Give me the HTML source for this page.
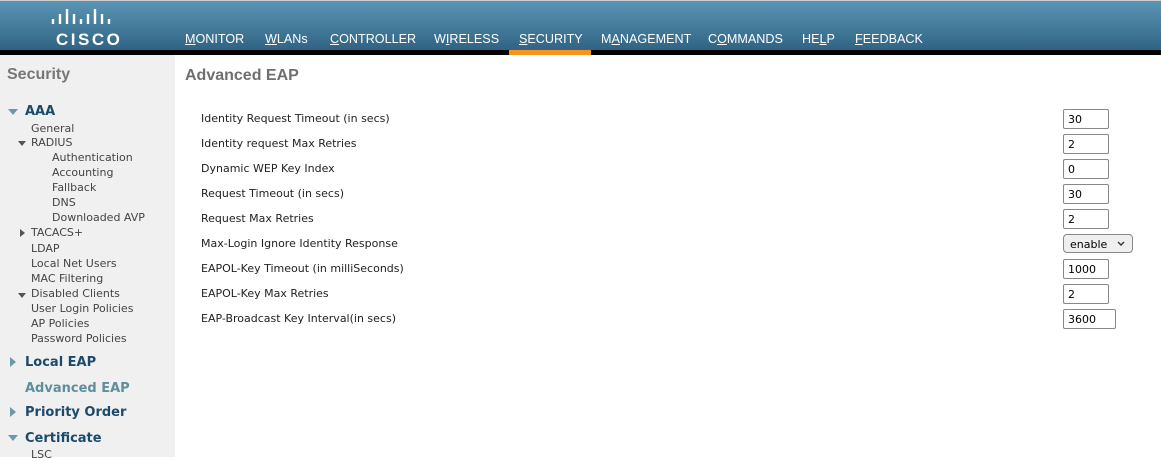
<!DOCTYPE html>
<html><head><style>
*{margin:0;padding:0;box-sizing:border-box}
body{width:1161px;height:457px;overflow:hidden;background:#fff;font-family:"DejaVu Sans",Verdana,sans-serif;position:relative}
.hdr{position:absolute;left:0;top:0;width:1161px;height:51px;border-top:1px solid #ccc;background:linear-gradient(#5b95b5,#2f6283)}
.blk{position:absolute;left:0;top:50px;width:1161px;height:5px;background:#000}
.org{position:absolute;left:509px;top:50px;width:82px;height:5px;background:#f7941d}
.nav{position:absolute;top:32px;color:#fff;font:12.6px "Liberation Sans",Tahoma,sans-serif}
.nav u{text-decoration:underline}
.side{position:absolute;left:0;top:55px;width:175px;height:402px;background:#f0f0f0}
.t{position:absolute;font-size:11px;color:#444;white-space:nowrap}
.b{position:absolute;font:bold 13px "DejaVu Sans",Verdana,sans-serif;color:#1b4a6b;white-space:nowrap}
.tri{position:absolute;width:0;height:0}
.l{position:absolute;left:201px;font-size:11px;color:#222;white-space:nowrap}
.in{position:absolute;left:1063px;width:46px;height:20px;border:1px solid #888;border-radius:2px;font-size:11px;padding:3px 0 0 4px;color:#000;background:#fff}
</style></head><body>
<div class="hdr"></div>
<div class="blk"></div><div class="org"></div>
<svg style="position:absolute;left:50px;top:8px" width="70" height="18">
<g stroke="#fff" stroke-width="2.4">
<line x1="3" y1="11" x2="3" y2="16"/><line x1="10" y1="6" x2="10" y2="16"/><line x1="17" y1="1" x2="17" y2="16"/><line x1="24" y1="6" x2="24" y2="16"/><line x1="31" y1="11" x2="31" y2="16"/><line x1="38" y1="6" x2="38" y2="16"/><line x1="45" y1="1" x2="45" y2="16"/><line x1="52" y1="6" x2="52" y2="16"/><line x1="59" y1="11" x2="59" y2="16"/>
</g></svg>
<div style="position:absolute;left:56px;top:30px;color:#fff;font:bold 17px 'Liberation Sans',sans-serif;letter-spacing:2.5px">CISCO</div>
<div class="nav" style="left:185px"><u>M</u>ONITOR</div>
<div class="nav" style="left:265px"><u>W</u>LANs</div>
<div class="nav" style="left:330px"><u>C</u>ONTROLLER</div>
<div class="nav" style="left:434px">W<u>I</u>RELESS</div>
<div class="nav" style="left:519px"><u>S</u>ECURITY</div>
<div class="nav" style="left:601px">M<u>A</u>NAGEMENT</div>
<div class="nav" style="left:708px">C<u>O</u>MMANDS</div>
<div class="nav" style="left:802px">HE<u>L</u>P</div>
<div class="nav" style="left:855px"><u>F</u>EEDBACK</div>
<div class="side"></div>
<div style="position:absolute;left:7px;top:66px;font:bold 16px 'Liberation Sans',sans-serif;color:#777">Security</div>
<div style="position:absolute;left:185px;top:67px;font:bold 16px 'Liberation Sans',sans-serif;color:#6f6f6f">Advanced EAP</div>
<div class="tri" style="left:8px;top:109px;border-left:5px solid transparent;border-right:5px solid transparent;border-top:6px solid #6a9aaa"></div>
<div class="b" style="left:25px;top:104px">AAA</div>
<div class="t" style="left:31px;top:122px">General</div>
<div class="tri" style="left:18px;top:141px;border-left:4px solid transparent;border-right:4px solid transparent;border-top:5px solid #555"></div>
<div class="t" style="left:31px;top:136px">RADIUS</div>
<div class="t" style="left:52px;top:151px">Authentication</div>
<div class="t" style="left:52px;top:166px">Accounting</div>
<div class="t" style="left:52px;top:181px">Fallback</div>
<div class="t" style="left:52px;top:196px">DNS</div>
<div class="t" style="left:52px;top:211px">Downloaded AVP</div>
<div class="tri" style="left:20px;top:229px;border-top:4px solid transparent;border-bottom:4px solid transparent;border-left:5px solid #555"></div>
<div class="t" style="left:31px;top:226px">TACACS+</div>
<div class="t" style="left:31px;top:242px">LDAP</div>
<div class="t" style="left:31px;top:257px">Local Net Users</div>
<div class="t" style="left:31px;top:272px">MAC Filtering</div>
<div class="tri" style="left:18px;top:293px;border-left:4px solid transparent;border-right:4px solid transparent;border-top:5px solid #555"></div>
<div class="t" style="left:31px;top:287px">Disabled Clients</div>
<div class="t" style="left:31px;top:302px">User Login Policies</div>
<div class="t" style="left:31px;top:317px">AP Policies</div>
<div class="t" style="left:31px;top:332px">Password Policies</div>
<div class="tri" style="left:10px;top:357px;border-top:5px solid transparent;border-bottom:5px solid transparent;border-left:6px solid #6a9aaa"></div>
<div class="b" style="left:25px;top:355px">Local EAP</div>
<div class="b" style="left:25px;top:381px;color:#5f8f9c">Advanced EAP</div>
<div class="tri" style="left:10px;top:407px;border-top:5px solid transparent;border-bottom:5px solid transparent;border-left:6px solid #6a9aaa"></div>
<div class="b" style="left:25px;top:405px">Priority Order</div>
<div class="tri" style="left:8px;top:435px;border-left:5px solid transparent;border-right:5px solid transparent;border-top:6px solid #6a9aaa"></div>
<div class="b" style="left:25px;top:431px">Certificate</div>
<div class="t" style="left:31px;top:448px">LSC</div>
<div class="l" style="top:112px">Identity Request Timeout (in secs)</div>
<div class="l" style="top:137px">Identity request Max Retries</div>
<div class="l" style="top:162px">Dynamic WEP Key Index</div>
<div class="l" style="top:187px">Request Timeout (in secs)</div>
<div class="l" style="top:212px">Request Max Retries</div>
<div class="l" style="top:237px">Max-Login Ignore Identity Response</div>
<div class="l" style="top:262px">EAPOL-Key Timeout (in milliSeconds)</div>
<div class="l" style="top:287px">EAPOL-Key Max Retries</div>
<div class="l" style="top:312px">EAP-Broadcast Key Interval(in secs)</div>
<div class="in" style="top:109px">30</div>
<div class="in" style="top:134px">2</div>
<div class="in" style="top:159px">0</div>
<div class="in" style="top:184px">30</div>
<div class="in" style="top:209px">2</div>
<div class="in" style="top:234px;width:70px;height:19px;border-radius:4px;background:#efefef;padding:3px 0 0 6px">enable<svg style="position:absolute;right:7px;top:6px" width="8" height="6"><path d="M1 1 L4 4 L7 1" stroke="#333" stroke-width="1.4" fill="none"/></svg></div>
<div class="in" style="top:259px">1000</div>
<div class="in" style="top:284px">2</div>
<div class="in" style="top:309px;width:53px">3600</div>
</body></html>
